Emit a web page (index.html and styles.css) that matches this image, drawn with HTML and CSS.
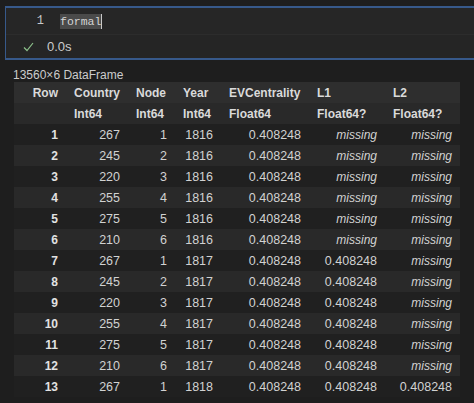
FILE: index.html
```html
<!DOCTYPE html>
<html>
<head>
<meta charset="utf-8">
<link rel="stylesheet" href="styles.css">
</head>
<body>
<div class="cell">
  <div class="input">
    <span class="lineno">1</span>
    <span class="code"><span class="sel">formal</span><span class="cursor"></span></span>
  </div>
  <div class="status">
    <svg class="check" width="11" height="10" viewBox="0 0 11 10"><path d="M1 5.5 L4 8.5 L10 1" fill="none" stroke="#8cc08a" stroke-width="1.2"/></svg>
    <span class="time">0.0s</span>
  </div>
</div>
<div class="output">
  <div class="caption">13560×6 DataFrame</div>
  <table class="df">
    <colgroup>
      <col class="c-row"><col class="c-country"><col class="c-node"><col class="c-year"><col class="c-ev"><col class="c-l1"><col class="c-l2">
    </colgroup>
    <thead>
      <tr class="names"><th class="rh">Row</th><th>Country</th><th>Node</th><th>Year</th><th>EVCentrality</th><th>L1</th><th>L2</th></tr>
      <tr class="types"><th></th><th>Int64</th><th>Int64</th><th>Int64</th><th>Float64</th><th>Float64?</th><th>Float64?</th></tr>
    </thead>
    <tbody>
      <tr><td class="rn">1</td><td>267</td><td>1</td><td>1816</td><td>0.408248</td><td class="m">missing</td><td class="m">missing</td></tr>
      <tr><td class="rn">2</td><td>245</td><td>2</td><td>1816</td><td>0.408248</td><td class="m">missing</td><td class="m">missing</td></tr>
      <tr><td class="rn">3</td><td>220</td><td>3</td><td>1816</td><td>0.408248</td><td class="m">missing</td><td class="m">missing</td></tr>
      <tr><td class="rn">4</td><td>255</td><td>4</td><td>1816</td><td>0.408248</td><td class="m">missing</td><td class="m">missing</td></tr>
      <tr><td class="rn">5</td><td>275</td><td>5</td><td>1816</td><td>0.408248</td><td class="m">missing</td><td class="m">missing</td></tr>
      <tr><td class="rn">6</td><td>210</td><td>6</td><td>1816</td><td>0.408248</td><td class="m">missing</td><td class="m">missing</td></tr>
      <tr><td class="rn">7</td><td>267</td><td>1</td><td>1817</td><td>0.408248</td><td>0.408248</td><td class="m">missing</td></tr>
      <tr><td class="rn">8</td><td>245</td><td>2</td><td>1817</td><td>0.408248</td><td>0.408248</td><td class="m">missing</td></tr>
      <tr><td class="rn">9</td><td>220</td><td>3</td><td>1817</td><td>0.408248</td><td>0.408248</td><td class="m">missing</td></tr>
      <tr><td class="rn">10</td><td>255</td><td>4</td><td>1817</td><td>0.408248</td><td>0.408248</td><td class="m">missing</td></tr>
      <tr><td class="rn">11</td><td>275</td><td>5</td><td>1817</td><td>0.408248</td><td>0.408248</td><td class="m">missing</td></tr>
      <tr><td class="rn">12</td><td>210</td><td>6</td><td>1817</td><td>0.408248</td><td>0.408248</td><td class="m">missing</td></tr>
      <tr><td class="rn">13</td><td>267</td><td>1</td><td>1818</td><td>0.408248</td><td>0.408248</td><td>0.408248</td></tr>
    </tbody>
  </table>
</div>
</body>
</html>
```
FILE: styles.css
```css
html, body {
  margin: 0;
  padding: 0;
  background: #1e1e1e;
  font-family: "Liberation Sans", Arial, sans-serif;
  color: #d4d4d4;
  overflow: hidden;
}
.cell {
  margin-top: 6px;
  margin-left: 5px;
  border-top: 2px solid #37598a;
  border-bottom: 2px solid #37598a;
  border-left: 1px solid #37598a;
  background: #262626;
}
.input {
  height: 26px;
  display: flex;
  align-items: center;
  border-bottom: 1px solid #2c2c2c;
}
.lineno {
  width: 38px;
  text-align: right;
  font-family: "Liberation Mono", monospace;
  font-size: 12px;
  color: #c8c8c8;
}
.code {
  margin-left: 16px;
  display: flex;
  align-items: center;
  font-family: "Liberation Mono", monospace;
  font-size: 11.5px;
  color: #d4d4d4;
}
.sel {
  background: #4a4a4a;
  line-height: 15px;
  padding: 0 0;
}
.cursor {
  width: 1px;
  height: 15px;
  background: #c8c8c8;
}
.status {
  height: 23px;
  display: flex;
  align-items: center;
  background: #252525;
}
.check {
  margin-left: 17px;
}
.time {
  margin-left: 13px;
  font-size: 13px;
  color: #cccccc;
}
.output {
  padding: 8px 0 0 13px;
}
.caption {
  font-size: 12px;
  line-height: 14px;
  color: #cccccc;
}
.df {
  margin-left: 1px;
  border-collapse: collapse;
  table-layout: fixed;
  width: 446px;
}
.c-row { width: 52px; }
.c-country { width: 62px; }
.c-node { width: 47px; }
.c-year { width: 46px; }
.c-ev { width: 88px; }
.c-l1 { width: 76px; }
.c-l2 { width: 75px; }
.df th, .df td {
  height: 21px;
  padding: 0 8px;
  white-space: nowrap;
  overflow: hidden;
}
.df th {
  font-size: 12px;
  font-weight: bold;
  text-align: left;
  color: #dadada;
}
.df th.rh {
  text-align: right;
}
.names { background: #2e2e2e; }
.types { background: #292929; }
.df td {
  font-size: 12.5px;
  text-align: right;
  color: #d2d2d2;
}
.df td.rn {
  font-weight: bold;
  font-size: 12px;
  color: #e2e2e2;
}
.df td.m {
  font-style: italic;
  font-size: 12px;
}
.df tbody tr:nth-child(odd) { background: #202020; }
.df tbody tr:nth-child(even) { background: #292929; }
```
